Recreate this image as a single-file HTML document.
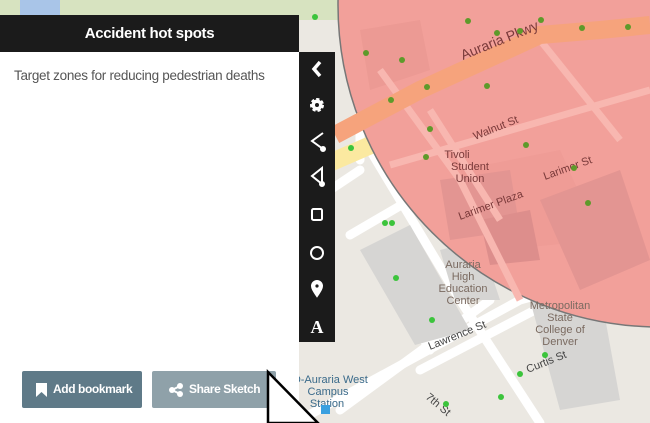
<!DOCTYPE html>
<html><head><style>
body{margin:0;width:650px;height:423px;overflow:hidden;position:relative;font-family:"Liberation Sans",sans-serif;background:#ebe8e2}
.abs{position:absolute}
</style></head><body>
<svg class="abs" style="left:0;top:0" width="650" height="423">
<rect width="650" height="423" fill="#ebe8e2"/>
<rect x="0" y="0" width="340" height="20" fill="#d7e3c0"/>
<rect x="20" y="0" width="40" height="16" fill="#a9c5e8"/>
<g stroke="#fff" stroke-width="9" fill="none" stroke-linecap="round">
<path d="M360 160 L360 30"/><path d="M360 170 L330 190"/>
<path d="M370 150 L460 300 L540 423"/>
<path d="M300 420 L520 300 L700 250"/>
<path d="M340 410 L490 300"/>
<path d="M350 235 L410 200"/>
<path d="M400 300 L430 350"/>
<path d="M420 370 L650 250"/>
</g>
<polygon points="360,250 410,225 470,330 415,345" fill="#d6d5d3"/>
<polygon points="440,250 480,240 500,300 455,300" fill="#d6d5d3"/>
<polygon points="530,300 600,290 620,400 560,410" fill="#d6d5d3"/>
<path d="M290 180 L660 20" stroke="#fbe9a0" stroke-width="18"/>
<circle cx="660" cy="5" r="322" fill="#f2a09a" stroke="#777" stroke-width="1.5"/>
<polygon points="460,170 560,150 600,240 500,250" fill="#ec9a94" opacity=".6"/>
<polygon points="440,180 510,170 520,230 450,240" fill="#e39592"/>
<polygon points="540,200 620,170 650,260 580,290" fill="#e39592"/>
<polygon points="480,220 530,210 540,260 490,265" fill="#dd8e8c"/>
<polygon points="360,30 420,20 430,70 370,90" fill="#ec9a94"/>
<g stroke="#f8b7b0" stroke-width="7" fill="none">
<path d="M380 70 L460 180 L520 300"/><path d="M390 165 L650 90"/><path d="M540 40 L620 140"/><path d="M430 110 L500 220"/>
</g>
<path d="M335 135 L420 90 L540 35 L600 30 L650 25" stroke="#f6a37c" stroke-width="18" fill="none"/>
<g font-size="11" fill="#7a3a3a">
<text x="463" y="60" font-size="14" transform="rotate(-22 463 60)">Auraria Pkwy</text>
<text x="457" y="158" text-anchor="middle">Tivoli</text>
<text x="470" y="170" text-anchor="middle">Student</text>
<text x="470" y="182" text-anchor="middle">Union</text>
<text x="460" y="220" transform="rotate(-20 460 220)">Larimer Plaza</text>
<text x="545" y="180" transform="rotate(-20 545 180)">Larimer St</text>
<text x="475" y="140" transform="rotate(-22 475 140)">Walnut St</text>
</g>
<g font-size="11" fill="#7a6a60" text-anchor="middle">
<text x="463" y="268">Auraria</text><text x="463" y="280">High</text><text x="463" y="292">Education</text><text x="463" y="304">Center</text>
<text x="560" y="309">Metropolitan</text><text x="560" y="321">State</text><text x="560" y="333">College of</text><text x="560" y="345">Denver</text>
</g>
<g font-size="11" fill="#444">
<text x="430" y="350" transform="rotate(-22 430 350)">Lawrence St</text>
<text x="528" y="373" transform="rotate(-22 528 373)">Curtis St</text>
<text x="425" y="398" transform="rotate(40 425 398)">7th St</text>
</g>
<g font-size="11" fill="#3a6a8a" text-anchor="middle">
<text x="330" y="383">O-Auraria West</text><text x="328" y="395">Campus</text><text x="327" y="407">Station</text>
</g>
<rect x="321" y="405" width="9" height="9" fill="#3aa0e0"/>
<g fill="#5e9a2a">
<circle cx="468" cy="21" r="3"/><circle cx="497" cy="33" r="3"/><circle cx="520" cy="31" r="3"/><circle cx="541" cy="20" r="3"/><circle cx="582" cy="28" r="3"/><circle cx="628" cy="27" r="3"/><circle cx="366" cy="53" r="3"/><circle cx="402" cy="60" r="3"/><circle cx="427" cy="87" r="3"/><circle cx="487" cy="86" r="3"/><circle cx="391" cy="100" r="3"/><circle cx="430" cy="129" r="3"/><circle cx="426" cy="157" r="3"/><circle cx="526" cy="145" r="3"/><circle cx="574" cy="168" r="3"/><circle cx="588" cy="203" r="3"/>
</g>
<g fill="#3cc43c">
<circle cx="315" cy="17" r="3"/><circle cx="351" cy="148" r="3"/><circle cx="385" cy="223" r="3"/><circle cx="392" cy="223" r="3"/><circle cx="396" cy="278" r="3"/><circle cx="432" cy="320" r="3"/><circle cx="520" cy="374" r="3"/><circle cx="501" cy="397" r="3"/><circle cx="446" cy="404" r="3"/><circle cx="545" cy="355" r="3"/>
</g>
</svg>
<div class="abs" style="left:0;top:15px;width:299px;height:37px;background:#1b1b1b;color:#fff;font-weight:bold;font-size:15px;text-align:center;line-height:37px;letter-spacing:-0.3px">Accident hot spots</div>
<div class="abs" style="left:0;top:52px;width:299px;height:371px;background:#fff"></div>
<div class="abs" style="left:14px;top:68px;font-size:13.5px;color:#555;letter-spacing:-0.3px">Target zones for reducing pedestrian deaths</div>
<div class="abs" style="left:22px;top:371px;width:120px;height:37px;background:#5f7a88;border-radius:2px;color:#fff;font-weight:bold;font-size:12px;line-height:37px;letter-spacing:-0.4px">
<svg class="abs" style="left:14px;top:12px" width="11" height="14"><path d="M0 0H11V14L5.5 9 0 14Z" fill="#fff"/></svg><span style="position:absolute;left:31px">Add bookmark</span></div>
<div class="abs" style="left:152px;top:371px;width:124px;height:37px;background:#8fa1a9;border-radius:2px;color:#fff;font-weight:bold;font-size:12px;line-height:37px;letter-spacing:-0.4px">
<svg class="abs" style="left:17px;top:12px" width="14" height="14"><g fill="#fff"><circle cx="3" cy="7" r="3"/><circle cx="11" cy="3" r="3"/><circle cx="11" cy="11" r="3"/></g><path d="M3 7L11 3M3 7L11 11" stroke="#fff" stroke-width="2"/></svg><span style="position:absolute;left:37px">Share Sketch</span></div>
<div class="abs" style="left:299px;top:52px;width:36px;height:290px;background:#1b1b1b"></div>
<svg class="abs" style="left:299px;top:52px" width="36" height="290" fill="none" stroke="#fff" stroke-width="2">
<path d="M21 10 L15 17 L21 24" stroke-width="3.5"/>
<circle cx="18" cy="53" r="5.5" fill="#fff" stroke="#fff" stroke-dasharray="3 2" stroke-width="3"/><circle cx="18" cy="53" r="2" fill="#1b1b1b" stroke="none"/>
<path d="M24 81 L13 89 L24 97"/><circle cx="24" cy="97" r="2" fill="#fff"/>
<path d="M23 116 L13 124 L23 132 Z"/><circle cx="23" cy="132" r="2" fill="#fff"/>
<rect x="13" y="157" width="10" height="11" rx="1.5"/>
<circle cx="18" cy="201" r="6"/>
<path d="M18 244 C14 238 13 236 13 234 A5 5 0 0 1 23 234 C23 236 22 238 18 244Z" fill="#fff"/><circle cx="18" cy="234" r="1.6" fill="#1b1b1b" stroke="none"/>
<text x="18" y="281" fill="#fff" stroke="none" font-family="Liberation Serif,serif" font-weight="bold" font-size="18" text-anchor="middle">A</text>
</svg>
<svg class="abs" style="left:262px;top:368px" width="70" height="55"><path d="M6 4 L6 55 L56 55 Z" fill="#fff" stroke="#000" stroke-width="2.5"/></svg>
</body></html>
